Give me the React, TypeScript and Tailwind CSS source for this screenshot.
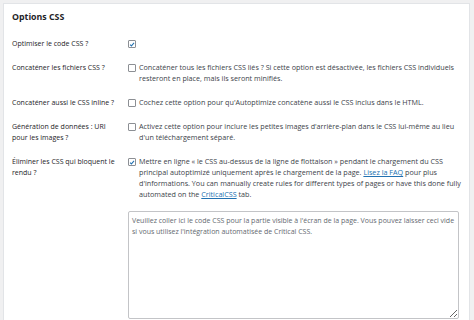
import React from "react";

interface RowProps {
  label: React.ReactNode[];
  checked?: boolean;
  lines?: React.ReactNode[];
}

function Check({ checked }: { checked?: boolean }) {
  return (
    <span className="mt-[2px] flex h-[8px] w-[8px] shrink-0 items-center justify-center rounded-[1px] border border-[#8c8f94] bg-white">
      {checked && (
        <svg width="7" height="7" viewBox="0 0 10 10">
          <path d="M1.8 5.2 L4 7.4 L8.4 2.4" fill="none" stroke="#2271b1" strokeWidth="1.7" />
        </svg>
      )}
    </span>
  );
}

function Row({ label, checked, lines = [] }: RowProps) {
  return (
    <div className="flex">
      <div className="w-[116px] shrink-0 text-[7px] text-[#1d2327]">
        {label.map((l, i) => (
          <div key={i} className="whitespace-nowrap">{l}</div>
        ))}
      </div>
      <div className="flex gap-[3px] text-[#3c434a]">
        <Check checked={checked} />
        <div className="text-[7.2px]">
          {lines.map((l, i) => (
            <div key={i} className="whitespace-nowrap">{l}</div>
          ))}
        </div>
      </div>
    </div>
  );
}

const Link = ({ children }: { children: React.ReactNode }) => (
  <a className="text-[#2271b1] underline">{children}</a>
);

export default function App() {
  return (
    <div className="h-[320px] w-[474px] overflow-hidden bg-[#f0f0f1] pl-[3px] pt-[3px] pr-[4px]" style={{ fontFamily: '"Open Sans", "Noto Sans", sans-serif' }}>
      <div className="h-[330px] border border-[#e2e4e7] bg-white pl-[8px] pr-[10px] pt-[8px] leading-[11px]">
        <h2 className="text-[8.8px] font-bold leading-[11px] text-[#1d2327]">Options CSS</h2>
        <div className="mt-[15px] flex flex-col gap-[13px]">
          <Row label={["Optimiser le code CSS ?"]} checked />
          <Row
            label={["Concaténer les fichiers CSS ?"]}
            lines={[
              "Concaténer tous les fichiers CSS liés ? Si cette option est désactivée, les fichiers CSS individuels",
              "resteront en place, mais ils seront minifiés.",
            ]}
          />
          <Row
            label={["Concaténer aussi le CSS inline ?"]}
            lines={["Cochez cette option pour qu'Autoptimize concatène aussi le CSS inclus dans le HTML."]}
          />
          <Row
            label={["Génération de données : URI", "pour les images ?"]}
            lines={[
              "Activez cette option pour inclure les petites images d'arrière-plan dans le CSS lui-même au lieu",
              "d'un téléchargement séparé.",
            ]}
          />
          <Row
            label={["Éliminer les CSS qui bloquent le", "rendu ?"]}
            checked
            lines={[
              "Mettre en ligne « le CSS au-dessus de la ligne de flottaison » pendant le chargement du CSS",
              <>principal autoptimizé uniquement après le chargement de la page. <Link>Lisez la FAQ</Link> pour plus</>,
              "d'informations. You can manually create rules for different types of pages or have this done fully",
              <>automated on the <Link>CriticalCSS</Link> tab.</>,
            ]}
          />
        </div>
        <div className="mt-[11px] flex">
          <div className="w-[116px] shrink-0" />
          <textarea
            className="h-[108px] w-[332px] resize rounded-[2px] border border-[#c3c4c7] px-[3px] py-[3px] text-[7px] leading-[11px] placeholder:text-[#646970]"
            placeholder={"Veuillez coller ici le code CSS pour la partie visible à l'écran de la page. Vous pouvez laisser ceci vide\nsi vous utilisez l'intégration automatisée de Critical CSS."}
          />
        </div>
      </div>
    </div>
  );
}
